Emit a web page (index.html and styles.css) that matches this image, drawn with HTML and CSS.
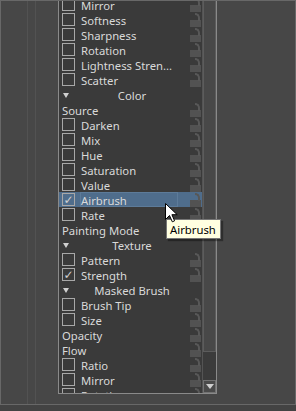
FILE: index.html
```html
<!DOCTYPE html>
<html>
<head>
<meta charset="utf-8">
<link rel="stylesheet" href="styles.css">
</head>
<body>
<div class="frame">
  <div class="col c1"></div>
  <div class="col c2"></div>
  <div class="col c3"></div>
  <div class="middle">
    <div class="list">
      <div class="rows">
        <div class="inner">
          <div class="row"><span class="cb"></span><span class="t">Mirror</span><span class="lock"></span></div>
          <div class="row"><span class="cb"></span><span class="t">Softness</span><span class="lock"></span></div>
          <div class="row"><span class="cb"></span><span class="t">Sharpness</span><span class="lock"></span></div>
          <div class="row"><span class="cb"></span><span class="t">Rotation</span><span class="lock"></span></div>
          <div class="row"><span class="cb"></span><span class="t">Lightness Stren...</span><span class="lock"></span></div>
          <div class="row"><span class="cb"></span><span class="t">Scatter</span><span class="lock"></span></div>
          <div class="row head"><span class="tri"></span><span class="ht">Color</span></div>
          <div class="row plain"><span class="t">Source</span><span class="lock"></span></div>
          <div class="row"><span class="cb"></span><span class="t">Darken</span><span class="lock"></span></div>
          <div class="row"><span class="cb"></span><span class="t">Mix</span><span class="lock"></span></div>
          <div class="row"><span class="cb"></span><span class="t">Hue</span><span class="lock"></span></div>
          <div class="row"><span class="cb"></span><span class="t">Saturation</span><span class="lock"></span></div>
          <div class="row"><span class="cb"></span><span class="t">Value</span><span class="lock"></span></div>
          <div class="row sel"><span class="cb on">✓</span><span class="t focus">Airbrush</span><span class="lock"></span></div>
          <div class="row"><span class="cb"></span><span class="t">Rate</span><span class="lock"></span></div>
          <div class="row plain"><span class="t">Painting Mode</span><span class="lock"></span></div>
          <div class="row head"><span class="tri"></span><span class="ht">Texture</span></div>
          <div class="row"><span class="cb"></span><span class="t">Pattern</span><span class="lock"></span></div>
          <div class="row"><span class="cb on">✓</span><span class="t">Strength</span><span class="lock"></span></div>
          <div class="row head"><span class="tri"></span><span class="ht">Masked Brush</span></div>
          <div class="row"><span class="cb"></span><span class="t">Brush Tip</span><span class="lock"></span></div>
          <div class="row"><span class="cb"></span><span class="t">Size</span><span class="lock"></span></div>
          <div class="row plain"><span class="t">Opacity</span><span class="lock"></span></div>
          <div class="row plain"><span class="t">Flow</span><span class="lock"></span></div>
          <div class="row"><span class="cb"></span><span class="t">Ratio</span><span class="lock"></span></div>
          <div class="row"><span class="cb"></span><span class="t">Mirror</span><span class="lock"></span></div>
          <div class="row"><span class="cb"></span><span class="t">Rotation</span><span class="lock"></span></div>
        </div>
      </div>
      <div class="sbar">
        <div class="thumb"></div>
        <div class="track"></div>
        <div class="btn"><svg width="8" height="5" viewBox="0 0 8 5"><path d="M0 0H8L4 5Z" fill="#cfcfcf"/></svg></div>
      </div>
    </div>
  </div>
  <div class="right"></div>
</div>
<div class="tip">Airbrush</div>
<svg class="cursor" width="13" height="20" viewBox="0 0 13 20"><path d="M0.5 0.5V16.5L4.5 12.5L7.3 18.8L9.6 17.8L6.9 11.7H12.2Z" fill="#fff" stroke="#000" stroke-width="1" stroke-linejoin="miter"/></svg>
</body>
</html>
```
FILE: styles.css
```css
html, body {
  margin: 0;
  padding: 0;
}
body {
  width: 296px;
  height: 411px;
  overflow: hidden;
  background: #434343;
  position: relative;
  font-family: "Noto Sans", "DejaVu Sans", sans-serif;
  font-size: 11.3px;
  color: #d9d9d9;
}
.frame {
  box-sizing: border-box;
  width: 296px;
  height: 405px;
  border: 1px solid #686868;
  background: #474747;
  display: flex;
}
.col {
  height: 100%;
}
.c1 {
  width: 26px;
  border-right: 1px solid #525252;
}
.c2 {
  width: 7px;
  border-right: 1px solid #525252;
}
.c3 {
  width: 22px;
}
.middle {
  width: 159px;
  display: flex;
  flex-direction: column;
}
.list {
  box-sizing: border-box;
  height: 393px;
  border-left: 1px solid #8a8a8a;
  border-right: 1px solid #8a8a8a;
  border-bottom: 1px solid #8a8a8a;
  background: #3a3a3a;
  display: flex;
}
.rows {
  width: 143px;
  overflow: hidden;
}
.inner {
  margin-top: -4px;
}
.row {
  box-sizing: border-box;
  height: 15px;
  display: flex;
  align-items: flex-start;
  padding-left: 3px;
  position: relative;
  white-space: nowrap;
}
.cb {
  box-sizing: border-box;
  width: 13px;
  height: 13px;
  margin-top: 1px;
  border: 1px solid #a8a8a8;
  flex: none;
  margin-right: 6px;
  font-size: 12px;
  line-height: 11px;
  text-align: center;
  color: #d0d0d0;
}
.t {
  line-height: 15px;
  padding-top: 1px;
}
.lock {
  position: absolute;
  right: 1px;
  top: 8px;
  width: 11px;
  height: 7px;
  background: #525252;
}
.lock::after {
  content: "";
  position: absolute;
  left: 5px;
  top: -7px;
  width: 5px;
  height: 8px;
  border-top: 2px solid #585858;
  border-right: 2px solid #585858;
  border-top-right-radius: 6px;
  box-sizing: border-box;
}
.head {
  display: grid;
  align-items: center;
}
.head > span {
  grid-area: 1 / 1;
}
.tri {
  justify-self: start;
  margin-left: 1px;
  margin-top: 1px;
  width: 0;
  height: 0;
  border-left: 3px solid transparent;
  border-right: 3px solid transparent;
  border-top: 5px solid #cfcfcf;
}
.ht {
  justify-self: center;
  line-height: 15px;
  padding-top: 1px;
}
.sel {
  background: #4f6d8c;
}
.focus {
  box-sizing: border-box;
  width: 98px;
  height: 15px;
  border: 1px solid #5d7b99;
  line-height: 13px;
  padding-top: 1px;
  margin-left: -1px;
}
.sbar {
  width: 13px;
  border-left: 1px solid #545454;
  display: flex;
  flex-direction: column;
}
.thumb {
  box-sizing: border-box;
  height: 351px;
  background: #484848;
  border: 1px solid #5c5c5c;
  border-top: none;
}
.track {
  flex: 1;
  background: #3b3b3b;
}
.btn {
  box-sizing: border-box;
  height: 13px;
  border: 1px solid #727272;
  background: #4a4a4a;
  display: flex;
  align-items: center;
  justify-content: center;
}
.right {
  flex: 1;
}
.tip {
  position: absolute;
  left: 166px;
  top: 219px;
  box-sizing: border-box;
  height: 20px;
  background: #ffffe1;
  border: 1px solid #767676;
  color: #000;
  line-height: 17px;
  padding: 1px 4px 0 3px;
  white-space: nowrap;
  box-shadow: 2px 2px 1px rgba(0, 0, 0, 0.35);
}
.cursor {
  position: absolute;
  left: 165px;
  top: 203px;
}
```
